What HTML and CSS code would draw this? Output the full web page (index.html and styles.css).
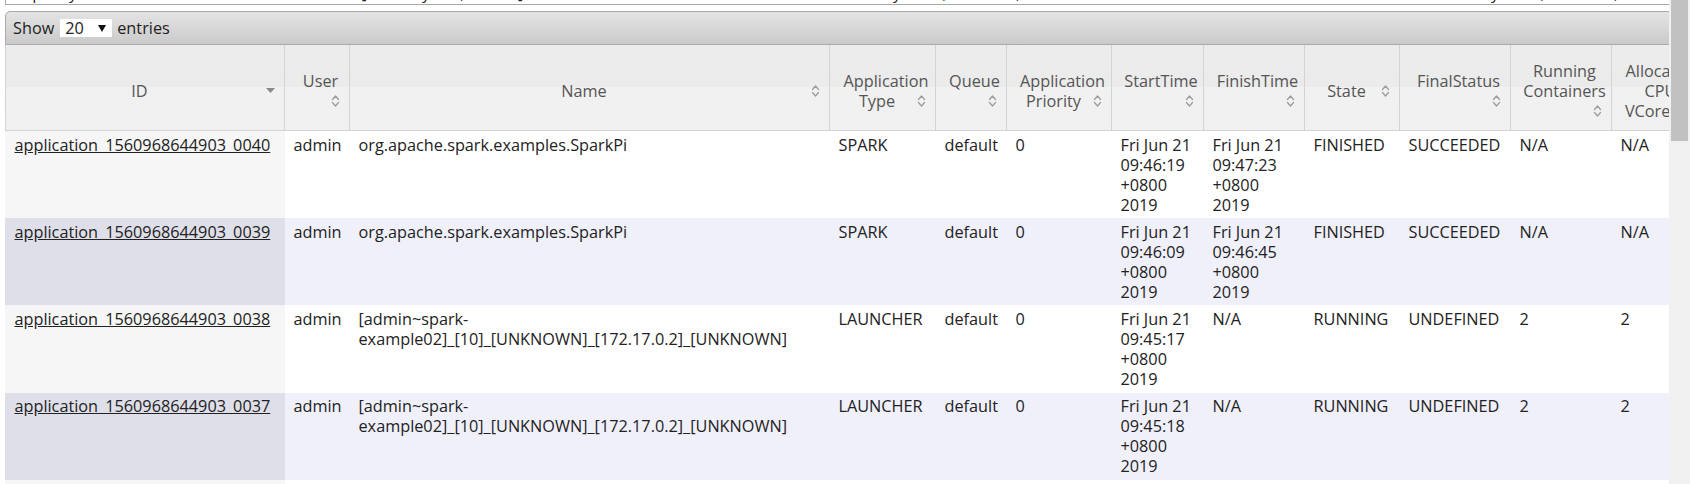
FILE: index.html
```html
<!DOCTYPE html>
<html lang="en">
<head>
<meta charset="utf-8">
<title>Applications</title>
<link rel="stylesheet" href="styles.css">
</head>
<body>
<div class="screen">
  <div class="viewport">
    <div class="page">
      <div class="metrics">
        <span class="m1">Capacity Scheduler</span>
        <span class="m2">[memory-mb, vcores]</span>
        <span class="m3">&lt;memory:1024, vCores:1, &gt;</span>
        <span class="m4">&lt;memory:8192, vCores:4, &gt;</span>
        <span class="m5">0</span>
      </div>
      <div class="apps">
        <div class="toolbar">
          <span>Show</span>
          <span class="select"><span>20</span><svg class="caret" width="8" height="7" viewBox="0 0 8 7"><path d="M0 0H8L4 7Z" fill="#111"/></svg></span>
          <span>entries</span>
        </div>
        <table class="grid">
          <thead>
            <tr>
              <th class="c-id">ID<span class="sort"><svg width="9" height="5" viewBox="0 0 9 5"><path d="M0 0H9L4.5 5Z" fill="#8a8a8a"/></svg></span></th>
              <th class="c-user">User<span class="sort"><svg class="carat" width="9" height="14" viewBox="0 0 9 14"><path d="M1.5 5.5L4.5 2L7.5 5.5M1.5 8.5L4.5 12L7.5 8.5"/></svg></span></th>
              <th class="c-name">Name<span class="sort"><svg class="carat" width="9" height="14" viewBox="0 0 9 14"><path d="M1.5 5.5L4.5 2L7.5 5.5M1.5 8.5L4.5 12L7.5 8.5"/></svg></span></th>
              <th class="c-type">Application Type<span class="sort"><svg class="carat" width="9" height="14" viewBox="0 0 9 14"><path d="M1.5 5.5L4.5 2L7.5 5.5M1.5 8.5L4.5 12L7.5 8.5"/></svg></span></th>
              <th class="c-queue">Queue<span class="sort"><svg class="carat" width="9" height="14" viewBox="0 0 9 14"><path d="M1.5 5.5L4.5 2L7.5 5.5M1.5 8.5L4.5 12L7.5 8.5"/></svg></span></th>
              <th class="c-prio">Application Priority<span class="sort"><svg class="carat" width="9" height="14" viewBox="0 0 9 14"><path d="M1.5 5.5L4.5 2L7.5 5.5M1.5 8.5L4.5 12L7.5 8.5"/></svg></span></th>
              <th class="c-start">StartTime<span class="sort"><svg class="carat" width="9" height="14" viewBox="0 0 9 14"><path d="M1.5 5.5L4.5 2L7.5 5.5M1.5 8.5L4.5 12L7.5 8.5"/></svg></span></th>
              <th class="c-finish">FinishTime<span class="sort"><svg class="carat" width="9" height="14" viewBox="0 0 9 14"><path d="M1.5 5.5L4.5 2L7.5 5.5M1.5 8.5L4.5 12L7.5 8.5"/></svg></span></th>
              <th class="c-state">State<span class="sort"><svg class="carat" width="9" height="14" viewBox="0 0 9 14"><path d="M1.5 5.5L4.5 2L7.5 5.5M1.5 8.5L4.5 12L7.5 8.5"/></svg></span></th>
              <th class="c-final">FinalStatus<span class="sort"><svg class="carat" width="9" height="14" viewBox="0 0 9 14"><path d="M1.5 5.5L4.5 2L7.5 5.5M1.5 8.5L4.5 12L7.5 8.5"/></svg></span></th>
              <th class="c-run">Running Containers<span class="sort"><svg class="carat" width="9" height="14" viewBox="0 0 9 14"><path d="M1.5 5.5L4.5 2L7.5 5.5M1.5 8.5L4.5 12L7.5 8.5"/></svg></span></th>
              <th class="c-cpu">Allocated CPU VCores<span class="sort"><svg class="carat" width="9" height="14" viewBox="0 0 9 14"><path d="M1.5 5.5L4.5 2L7.5 5.5M1.5 8.5L4.5 12L7.5 8.5"/></svg></span></th>
              <th class="c-mem">Allocated Memory MB<span class="sort"><svg class="carat" width="9" height="14" viewBox="0 0 9 14"><path d="M1.5 5.5L4.5 2L7.5 5.5M1.5 8.5L4.5 12L7.5 8.5"/></svg></span></th>
            </tr>
          </thead>
          <tbody>
            <tr>
              <td><a href="#">application_1560968644903_0040</a></td>
              <td>admin</td>
              <td>org.apache.spark.examples.SparkPi</td>
              <td>SPARK</td>
              <td>default</td>
              <td>0</td>
              <td>Fri Jun 21 09:46:19 +0800 2019</td>
              <td>Fri Jun 21 09:47:23 +0800 2019</td>
              <td>FINISHED</td>
              <td>SUCCEEDED</td>
              <td>N/A</td>
              <td>N/A</td>
              <td>N/A</td>
            </tr>
            <tr>
              <td><a href="#">application_1560968644903_0039</a></td>
              <td>admin</td>
              <td>org.apache.spark.examples.SparkPi</td>
              <td>SPARK</td>
              <td>default</td>
              <td>0</td>
              <td>Fri Jun 21 09:46:09 +0800 2019</td>
              <td>Fri Jun 21 09:46:45 +0800 2019</td>
              <td>FINISHED</td>
              <td>SUCCEEDED</td>
              <td>N/A</td>
              <td>N/A</td>
              <td>N/A</td>
            </tr>
            <tr>
              <td><a href="#">application_1560968644903_0038</a></td>
              <td>admin</td>
              <td>[admin~spark-example02]_[10]_[UNKNOWN]_[172.17.0.2]_[UNKNOWN]</td>
              <td>LAUNCHER</td>
              <td>default</td>
              <td>0</td>
              <td>Fri Jun 21 09:45:17 +0800 2019</td>
              <td>N/A</td>
              <td>RUNNING</td>
              <td>UNDEFINED</td>
              <td>2</td>
              <td>2</td>
              <td>2048</td>
            </tr>
            <tr>
              <td><a href="#">application_1560968644903_0037</a></td>
              <td>admin</td>
              <td>[admin~spark-example02]_[10]_[UNKNOWN]_[172.17.0.2]_[UNKNOWN]</td>
              <td>LAUNCHER</td>
              <td>default</td>
              <td>0</td>
              <td>Fri Jun 21 09:45:18 +0800 2019</td>
              <td>N/A</td>
              <td>RUNNING</td>
              <td>UNDEFINED</td>
              <td>2</td>
              <td>2</td>
              <td>2048</td>
            </tr>
            <tr>
              <td><a href="#">application_1560968644903_0036</a></td>
              <td>admin</td>
              <td>org.apache.spark.examples.SparkPi</td>
              <td>SPARK</td>
              <td>default</td>
              <td>0</td>
              <td>Fri Jun 21 09:44:02 +0800 2019</td>
              <td>Fri Jun 21 09:44:51 +0800 2019</td>
              <td>FINISHED</td>
              <td>SUCCEEDED</td>
              <td>N/A</td>
              <td>N/A</td>
              <td>N/A</td>
            </tr>
          </tbody>
        </table>
      </div>
    </div>
  </div>
  <div class="scrollbar"><div class="thumb"></div></div>
</div>
</body>
</html>
```

FILE: styles.css
```css
html, body {
  margin: 0;
  padding: 0;
  height: 100%;
  overflow: hidden;
  background: #fff;
}

body {
  font-family: "Open Sans", "Noto Sans", "DejaVu Sans", sans-serif;
  font-size: 16.25px;
  line-height: 20px;
  color: #222;
}

.screen {
  display: flex;
  height: 484px;
}

.viewport {
  flex: none;
  width: 1669px;
  height: 484px;
  overflow: hidden;
}

.page {
  width: 1900px;
  padding-left: 5px;
}

/* cut-off metrics table above the list */
.metrics {
  display: grid;
  grid-template-columns: 348px 467px 598px 300px 100px;
  margin-top: -17px;
  padding: 0 0 1px 7px;
  border-left: 1px solid #a8a8a8;
  border-bottom: 1px solid #a8a8a8;
  width: 1900px;
  box-sizing: border-box;
  white-space: nowrap;
}

.apps {
  margin-top: 6px;
  width: 1828px;
}

.toolbar {
  display: flex;
  align-items: center;
  height: 32px;
  padding-left: 7px;
  border: 1px solid #aaa;
  border-radius: 5px 5px 0 0;
  background: linear-gradient(to bottom, #e3e3e3 0%, #d6d6d6 55%, #cacaca 100%);
  color: #222;
}

.select {
  display: flex;
  align-items: center;
  justify-content: space-between;
  width: 52px;
  height: 18px;
  margin: 0 5px 0 6px;
  padding: 0 6px 0 5px;
  box-sizing: border-box;
  background: #fff;
}

.caret {
  display: block;
}

.grid {
  table-layout: fixed;
  width: 1828px;
  border-collapse: separate;
  border-spacing: 0;
}

.grid th {
  box-sizing: border-box;
  height: 86px;
  padding: 6px 5px 0 12px;
  font-weight: normal;
  color: #555;
  text-align: center;
  vertical-align: middle;
  border-right: 1px solid #d3d3d3;
  border-bottom: 1px solid #d3d3d3;
  background: linear-gradient(to bottom, #ececec 0%, #ebebeb 50%, #f1f1f1 50%, #f0f0f0 100%);
}

.grid th:first-child {
  border-left: 1px solid #d3d3d3;
}

.sort {
  float: right;
  display: flex;
  align-items: center;
  justify-content: center;
  width: 18px;
  height: 20px;
}

.carat {
  display: block;
  fill: none;
  stroke: #9c9c9c;
  stroke-width: 1.3;
  stroke-linejoin: round;
  stroke-linecap: round;
}

.c-id { width: 280px; }
.c-user { width: 65px; }
.c-name { width: 480px; }
.c-type { width: 106px; }
.c-queue { width: 71px; }
.c-prio { width: 105px; }
.c-start { width: 92px; }
.c-finish { width: 101px; }
.c-state { width: 95px; }
.c-final { width: 111px; }
.c-run { width: 101px; }
.c-cpu { width: 91px; }
.c-mem { width: 130px; }

.grid td {
  box-sizing: border-box;
  padding: 3.6px 10px 3.6px 8.5px;
  vertical-align: top;
  text-align: left;
  background: #fff;
  color: #222;
}

.grid td:first-child {
  border-left: 1px solid transparent;
  background: #f6f6f6;
}

.grid tbody tr:nth-child(even) td {
  background: #f0f0fb;
}

.grid tbody tr:nth-child(even) td:first-child {
  background: #dfdfe9;
}

.grid td a {
  color: #222;
  text-decoration: underline;
}

.scrollbar {
  flex: none;
  width: 21px;
  height: 484px;
  padding: 0 2px;
  box-sizing: border-box;
  background: #f0f0f0;
}

.thumb {
  height: 141px;
  background: #c1c1c1;
}
```
